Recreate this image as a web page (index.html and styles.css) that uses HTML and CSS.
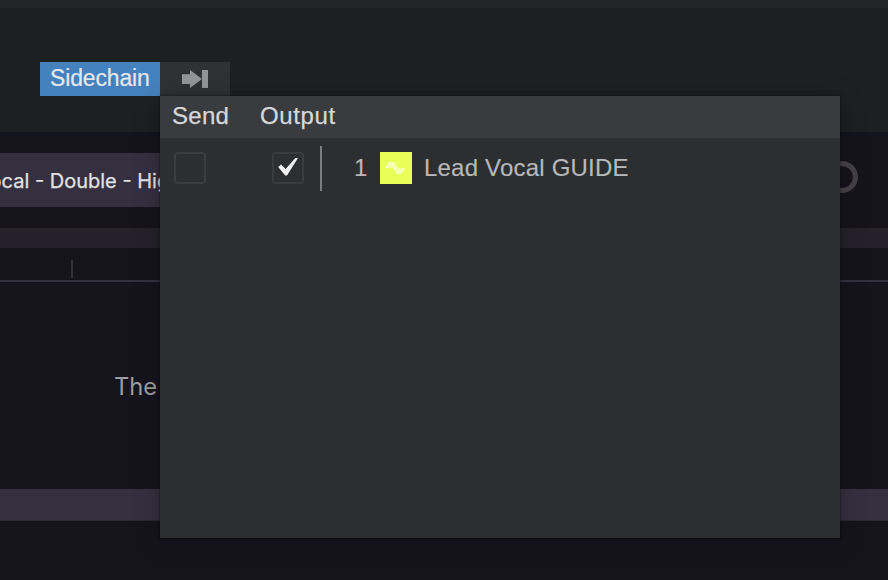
FILE: index.html
```html
<!DOCTYPE html>
<html lang="en">
<head>
<meta charset="utf-8">
<title>Sidechain</title>
<link rel="stylesheet" href="styles.css">
</head>
<body>
<header class="toolbar">
  <div class="sidechain">
    <span class="sidechain-label">Sidechain</span>
    <span class="sidechain-source">
      <svg width="28" height="20" viewBox="0 0 28 20"><path d="M1 5.3h8V1l11.4 8.4v1L9 19v-4H1z"/><path d="M21 1h6v18h-6z"/></svg>
    </span>
  </div>
</header>
<main class="editor">
  <div class="track-bar">
    <div class="track-title"><span>Vocal - Double - High</span></div>
    <svg class="ring" width="32" height="32" viewBox="0 0 32 32"><circle cx="16" cy="16" r="13.4"/></svg>
  </div>
  <div class="band"></div>
  <div class="ruler"><i class="tick"></i></div>
  <div class="lyrics"><span>The</span></div>
  <div class="lower-band"></div>
</main>
<section class="popup">
  <div class="popup-head">
    <span class="head-send">Send</span><span class="head-output">Output</span>
  </div>
  <div class="popup-row">
    <span class="check"></span>
    <span class="check output"><svg width="20" height="18" viewBox="0 0 20 18"><path d="M.2 9 3 6.6 7.6 11 17.3 0H20L9 17.5H7.2z"/></svg></span>
    <span class="divider"></span>
    <span class="number">1</span>
    <span class="wave"><svg width="32" height="32" viewBox="0 0 32 32"><path d="M4.5 16 9 10h5l4.3 6h7.2L21.5 22H17l-4.5-6z"/></svg></span>
    <span class="name">Lead Vocal GUIDE</span>
  </div>
</section>
</body>
</html>
```
FILE: styles.css
```css
* { box-sizing: border-box; }
body {
  margin: 0;
  width: 888px;
  height: 580px;
  overflow: hidden;
  position: relative;
  background: #15131c;
  font-family: "Liberation Sans", Arial, sans-serif;
  white-space: nowrap;
}
svg { display: block; }
.toolbar {
  height: 132px;
  padding: 54px 0 0 40px;
  background: #1e1f21;
  border-top: 8px solid #242527;
}
.sidechain { display: flex; height: 34px; }
.sidechain-label {
  width: 120px;
  padding-left: 10px;
  background: #4581bd;
  color: #e4e8ec;
  font-size: 23px;
  letter-spacing: -.15px;
  line-height: 33px;
  -webkit-text-stroke: .2px;
}
.sidechain-source {
  width: 70px;
  padding: 7px 0 0 11px;
  background: #303133;
}
.sidechain-source svg { margin-left: 10px; fill: #949597; }
.track-bar {
  display: flex;
  justify-content: space-between;
  height: 96px;
  padding: 21px 30px 0 0;
}
.track-title {
  display: flex;
  justify-content: flex-end;
  width: 181px;
  height: 54px;
  background: #34303f;
  color: #e3e2e5;
  font: 20px/56px Inter, sans-serif;
  -webkit-text-stroke: .25px;
}
.ring { margin-top: 8px; fill: none; stroke: #444248; stroke-width: 5.2; }
.band { height: 20px; background: #24212d; }
.ruler {
  height: 34px;
  padding: 12px 0 0 71px;
  border-bottom: 2px solid #34313f;
}
.tick { display: block; width: 2px; height: 18px; background: #34313f; }
.lyrics {
  height: 207px;
  padding: 90px 0 0 114px;
  color: #9d9ca1;
  font: 23.7px/30px Inter, sans-serif;
}
.lower-band { height: 32px; background: #34303f; border-bottom: 1px solid #2b2834; }
.popup {
  position: absolute;
  left: 160px;
  top: 96px;
  width: 680px;
  height: 442px;
  background: #2d2e2f;
  box-shadow: 0 2px 24px rgba(0, 0, 0, .22), 0 0 3px rgba(0, 0, 0, .5);
}
.popup-head {
  display: flex;
  height: 42px;
  padding-left: 12px;
  background: #3a3b3e;
  color: #d7d8da;
  font-size: 24px;
  line-height: 40px;
  -webkit-text-stroke: .25px;
}
.head-send { width: 88px; letter-spacing: .3px; }
.head-output { letter-spacing: .6px; }
.popup-row {
  display: flex;
  align-items: center;
  height: 60px;
  padding-left: 14px;
  color: #b8b9bb;
  font-size: 24px;
  -webkit-text-stroke: .15px;
}
.check {
  display: flex;
  width: 32px;
  height: 32px;
  border: 2px solid #3b3c3e;
  border-radius: 4px;
}
.check.output { margin-left: 66px; }
.check svg { margin: 4px 0 0 4px; fill: #f0f0f0; }
.divider { width: 2px; height: 45px; margin-left: 16px; background: #7b7c7e; }
.number { width: 58px; padding-left: 32px; }
.wave { width: 32px; height: 32px; background: #e9ff58; }
.wave path { fill: #f5ffb0; }
.name { margin-left: 12px; letter-spacing: .2px; }
```
